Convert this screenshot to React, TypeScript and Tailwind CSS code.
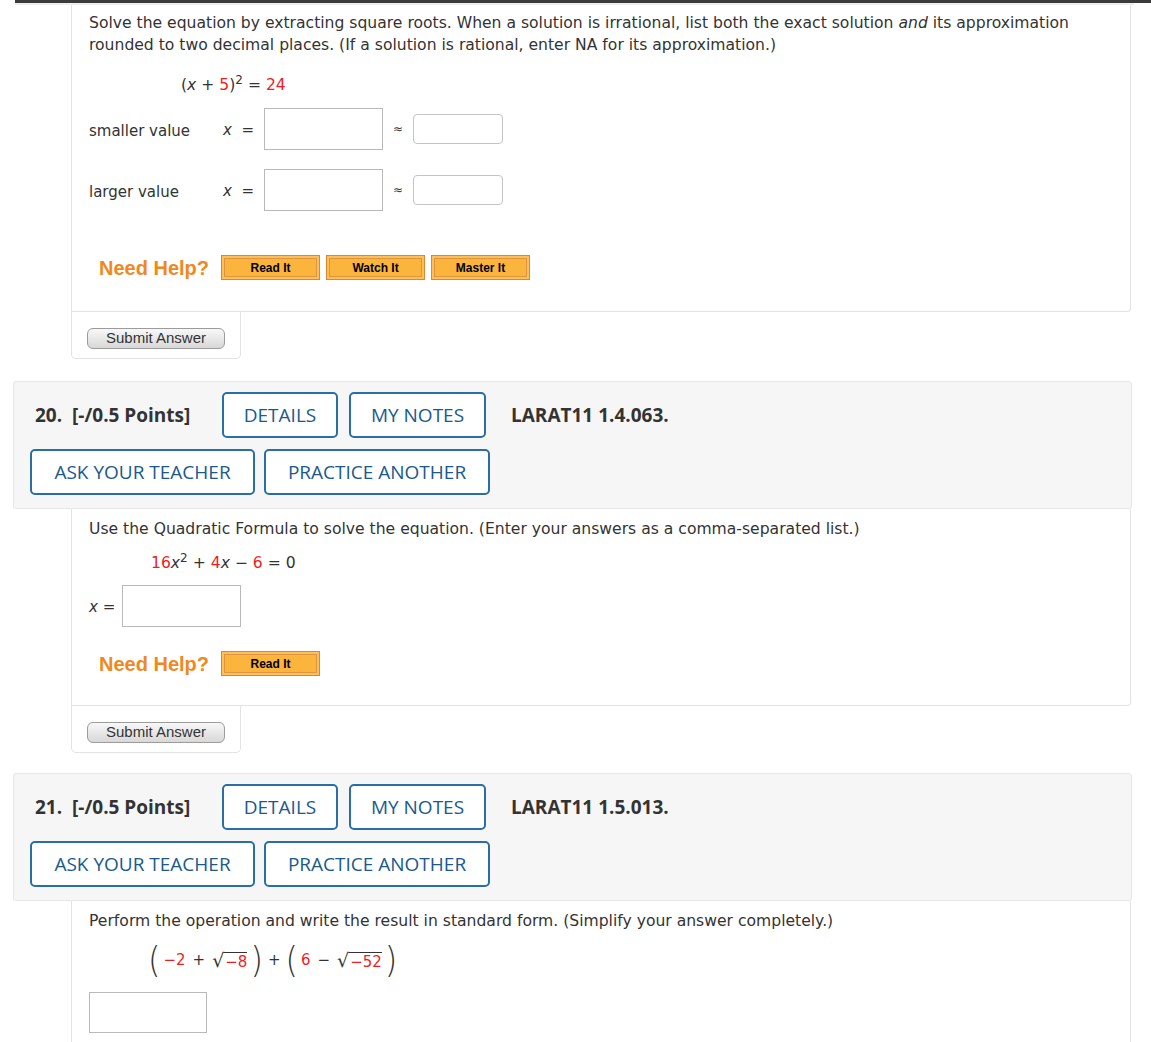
import React from "react"

const sans = { fontFamily: '"DejaVu Sans", Verdana, sans-serif' }
const open = { fontFamily: '"Open Sans", "Noto Sans", sans-serif' }
const arial = { fontFamily: '"Liberation Sans", Arial, sans-serif' }

const Red = ({ children }: { children: React.ReactNode }) => <span className="text-[#ee1d23]">{children}</span>
const X = () => <i>x</i>

function HelpButton({ label }: { label: string }) {
  return (
    <div
      className="w-[99px] h-[25px] flex items-center justify-center border border-[#dc8630] bg-[#fbb43c] shadow-[inset_0_0_0_2px_#fcc056,inset_0_0_0_3px_#de9440] text-[12px] font-bold text-black"
      style={arial}
    >
      {label}
    </div>
  )
}

function NeedHelp({ buttons }: { buttons: string[] }) {
  return (
    <div className="flex items-center ml-[10px] h-[25px]">
      <span className="text-[20px] leading-none font-bold text-[#f0891d] mr-[12px]" style={arial}>Need Help?</span>
      <div className="flex gap-[6px]">
        {buttons.map(b => <HelpButton key={b} label={b} />)}
      </div>
    </div>
  )
}

function Submit() {
  return (
    <div className="ml-[71px] w-[170px] h-[47px] border-x border-b border-[#e3e3e3] rounded-b-[5px] pl-[15px] pt-[16px]">
      <div
        className="w-[138px] h-[21px] rounded-[6px] border border-[#9b9b9b] bg-linear-to-b from-[#f8f8f8] to-[#d8d8d8] flex items-center justify-center text-[15px] text-[#333]"
        style={arial}
      >
        Submit Answer
      </div>
    </div>
  )
}

function BlueBtn({ label, w }: { label: string; w: string }) {
  return (
    <div className={`${w} h-[46px] border-2 border-[#2a6ea5] rounded-[5px] bg-white flex items-center justify-center text-[19px] font-medium text-[#1a5a8c]`} style={open}>
      {label}
    </div>
  )
}

function Header({ num, code }: { num: string; code: string }) {
  return (
    <div className="ml-[13px] w-[1119px] h-[128px] bg-[#f6f6f6] border border-[#e6e6e6] rounded-[3px] pt-[10px] flex flex-col gap-[11px]" style={open}>
      <div className="flex items-center pl-[21px]">
        <span className="text-[19px] font-bold text-[#333] w-[187px] whitespace-pre">{num}.  [-/0.5 Points]</span>
        <BlueBtn label="DETAILS" w="w-[116px]" />
        <div className="w-[11px]" />
        <BlueBtn label="MY NOTES" w="w-[137px]" />
        <span className="text-[19px] font-bold text-[#333] ml-[25px]">{code}</span>
      </div>
      <div className="flex items-center pl-[16px] gap-[9px]">
        <BlueBtn label="ASK YOUR TEACHER" w="w-[225px]" />
        <BlueBtn label="PRACTICE ANOTHER" w="w-[226px]" />
      </div>
    </div>
  )
}

function Box({ w, h, rounded }: { w: string; h: string; rounded?: boolean }) {
  return <div className={`${w} ${h} border border-[#b9b9b9] bg-white ${rounded ? "rounded-[4px] border-[#c4c4c4]" : ""}`} />
}

function Sqrt({ children }: { children: React.ReactNode }) {
  return (
    <span className="inline-flex items-end">
      <span className="text-[19px] leading-[22px] text-[#333]">√</span>
      <span className="border-t border-[#333] leading-[18px] pl-[1px] mt-[3px]">{children}</span>
    </span>
  )
}

function BigParen({ c }: { c: string }) {
  return <span className="inline-block text-[32px] leading-[32px] font-light scale-y-110 text-[#333]" style={sans}>{c}</span>
}

function ValueRow({ label, top }: { label: string; top: string }) {
  return (
    <div className={`${top} flex items-center`}>
      <span className="w-[134px] pt-[4px]">{label}</span>
      <span className="w-[41px] pt-[2px]"><X /> &nbsp;=</span>
      <Box w="w-[119px]" h="h-[42px]" />
      <span className="w-[30px] text-center text-[12px]">≈</span>
      <Box w="w-[90px]" h="h-[30px]" rounded />
    </div>
  )
}

export default function App() {
  return (
    <div className="w-[1151px] min-h-[1042px] bg-white overflow-hidden text-[#333] text-[15px]" style={sans}>
      <div className="ml-[15px] h-[3px] bg-[#3b3b3b]" />
      <div className="ml-[15px] w-[1119px] h-[2px] bg-[#efefef]" />

      {/* question 19 */}
      <div className="ml-[71px] w-[1060px] border-x border-b border-[#e3e3e3] rounded-br-[4px] pl-[17px] pr-[30px] pt-[7px] pb-[31px]">
        <p className="leading-[22px] text-[15.6px]">
          Solve the equation by extracting square roots. When a solution is irrational, list both the exact solution <i>and</i> its approximation rounded to two decimal places. (If a solution is rational, enter NA for its approximation.)
        </p>
        <div className="mt-[18px] ml-[92px] leading-[22px] text-[15.6px]">
          (<X /> + <Red>5</Red>)<sup className="text-[12px]">2</sup> = <Red>24</Red>
        </div>
        <ValueRow label="smaller value" top="mt-[12px]" />
        <ValueRow label="larger value" top="mt-[19px]" />
        <div className="mt-[44px]">
          <NeedHelp buttons={["Read It", "Watch It", "Master It"]} />
        </div>
      </div>
      <Submit />

      <div className="h-[22px]" />
      <Header num="20" code="LARAT11 1.4.063." />

      {/* question 20 */}
      <div className="ml-[71px] w-[1060px] border-x border-b border-[#e3e3e3] rounded-br-[4px] pl-[17px] pt-[9px] pb-[29px]">
        <p className="leading-[22px] text-[15.6px]">
          Use the Quadratic Formula to solve the equation. (Enter your answers as a comma-separated list.)
        </p>
        <div className="mt-[12px] ml-[62px] leading-[22px] text-[15.6px]">
          <Red>16</Red><X /><sup className="text-[12px]">2</sup> + <Red>4</Red><X /> − <Red>6</Red> = 0
        </div>
        <div className="mt-[11px] flex items-center">
          <span className="w-[33px] pt-[2px]"><X /> =</span>
          <Box w="w-[119px]" h="h-[42px]" />
        </div>
        <div className="mt-[24px]">
          <NeedHelp buttons={["Read It"]} />
        </div>
      </div>
      <Submit />

      <div className="h-[20px]" />
      <Header num="21" code="LARAT11 1.5.013." />

      {/* question 21 */}
      <div className="ml-[71px] w-[1060px] min-h-[160px] border-x border-[#e3e3e3] pl-[17px] pt-[9px]">
        <p className="leading-[22px] text-[15.6px]">
          Perform the operation and write the result in standard form. (Simplify your answer completely.)
        </p>
        <div className="mt-[10px] ml-[59px] h-[36px] flex items-center gap-[3px]">
          <BigParen c="(" />
          <Red>−2</Red>
          <span className="mx-[4px]">+</span>
          <Sqrt><Red>−8</Red></Sqrt>
          <BigParen c=")" />
          <span className="mx-[2px]">+</span>
          <BigParen c="(" />
          <Red>6</Red>
          <span className="mx-[4px]">−</span>
          <Sqrt><Red>−52</Red></Sqrt>
          <BigParen c=")" />
        </div>
        <div className="mt-[14px]">
          <Box w="w-[118px]" h="h-[41px]" />
        </div>
      </div>
    </div>
  )
}
